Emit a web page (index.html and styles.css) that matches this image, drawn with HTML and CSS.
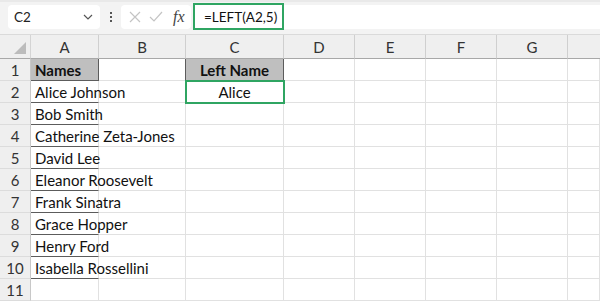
FILE: index.html
```html
<!DOCTYPE html>
<html>
<head>
<meta charset="utf-8">
<link rel="stylesheet" href="styles.css">
</head>
<body>
<div class="toolbar">
  <div class="namebox"><span>C2</span>
    <svg class="chev" width="10" height="6" viewBox="0 0 10 6"><path d="M1 1 L5 5 L9 1" fill="none" stroke="#555" stroke-width="1.2"/></svg>
  </div>
  <div class="dots"><i></i><i></i><i></i></div>
  <div class="fxbox">
    <svg width="12" height="12" viewBox="0 0 12 12"><path d="M1 1 L11 11 M11 1 L1 11" stroke="#c4c4c4" stroke-width="1.2"/></svg>
    <svg width="14" height="12" viewBox="0 0 14 12"><path d="M1 6 L5 10 L13 1" fill="none" stroke="#c4c4c4" stroke-width="1.2"/></svg>
    <span class="fx">fx</span>
  </div>
  <div class="formula"><span class="fbox">=LEFT(A2,5)</span></div>
</div>
<div class="sheet">
  <div class="corner"><svg width="12" height="12" viewBox="0 0 12 12"><polygon points="12,0 12,12 0,12" fill="#bcbcbc"/></svg></div>
  <div class="ch">A</div><div class="ch">B</div><div class="ch">C</div><div class="ch">D</div><div class="ch">E</div><div class="ch">F</div><div class="ch">G</div><div class="ch last"></div>

  <div class="rh">1</div><div class="c a hd">Names</div><div class="c"></div><div class="c hd ctr cl">Left Name</div><div class="c"></div><div class="c"></div><div class="c"></div><div class="c"></div><div class="c"></div>
  <div class="rh">2</div><div class="c a">Alice Johnson</div><div class="c"></div><div class="c ctr sel">Alice</div><div class="c"></div><div class="c"></div><div class="c"></div><div class="c"></div><div class="c"></div>
  <div class="rh">3</div><div class="c a">Bob Smith</div><div class="c"></div><div class="c"></div><div class="c"></div><div class="c"></div><div class="c"></div><div class="c"></div><div class="c"></div>
  <div class="rh">4</div><div class="c a">Catherine Zeta-Jones</div><div class="c"></div><div class="c"></div><div class="c"></div><div class="c"></div><div class="c"></div><div class="c"></div><div class="c"></div>
  <div class="rh">5</div><div class="c a">David Lee</div><div class="c"></div><div class="c"></div><div class="c"></div><div class="c"></div><div class="c"></div><div class="c"></div><div class="c"></div>
  <div class="rh">6</div><div class="c a">Eleanor Roosevelt</div><div class="c"></div><div class="c"></div><div class="c"></div><div class="c"></div><div class="c"></div><div class="c"></div><div class="c"></div>
  <div class="rh">7</div><div class="c a">Frank Sinatra</div><div class="c"></div><div class="c"></div><div class="c"></div><div class="c"></div><div class="c"></div><div class="c"></div><div class="c"></div>
  <div class="rh">8</div><div class="c a">Grace Hopper</div><div class="c"></div><div class="c"></div><div class="c"></div><div class="c"></div><div class="c"></div><div class="c"></div><div class="c"></div>
  <div class="rh">9</div><div class="c a">Henry Ford</div><div class="c"></div><div class="c"></div><div class="c"></div><div class="c"></div><div class="c"></div><div class="c"></div><div class="c"></div>
  <div class="rh">10</div><div class="c a">Isabella Rossellini</div><div class="c"></div><div class="c"></div><div class="c"></div><div class="c"></div><div class="c"></div><div class="c"></div><div class="c"></div>
  <div class="rh">11</div><div class="c"></div><div class="c"></div><div class="c"></div><div class="c"></div><div class="c"></div><div class="c"></div><div class="c"></div><div class="c"></div>
</div>
</body>
</html>
```
FILE: styles.css
```css
* { box-sizing: border-box; }
html, body { margin: 0; padding: 0; }
body {
  width: 600px;
  height: 301px;
  overflow: hidden;
  background: #fff;
  font-family: Lato, "Liberation Sans", sans-serif;
  color: #1a1a1a;
}
.toolbar {
  height: 35px;
  background: #f3f3f3;
  border-top: 2px solid #e9e9e9;
  border-bottom: 1px solid #dadada;
  display: flex;
  align-items: center;
  padding-left: 8px;
  padding-bottom: 3px;
}
.namebox {
  width: 92px;
  height: 24px;
  background: #fff;
  border-radius: 4px;
  display: flex;
  align-items: center;
  justify-content: space-between;
  padding: 0 7px 0 6px;
  font-size: 13.5px;
  color: #222;
}
.dots {
  width: 21px;
  display: flex;
  flex-direction: column;
  align-items: center;
  gap: 2px;
}
.dots i { width: 2px; height: 2px; background: #555; display: block; }
.fxbox {
  width: 70px;
  height: 24px;
  background: #fff;
  border-radius: 4px;
  display: flex;
  align-items: center;
  padding-left: 8px;
  gap: 8px;
}
.fx {
  font-family: "Liberation Serif", serif;
  font-style: italic;
  font-size: 16px;
  color: #444;
  margin-left: 2px;
}
.formula {
  flex: 1;
  height: 24px;
  margin-left: 2px;
  background: #fff;
  display: flex;
  align-items: center;
  position: relative;
}
.fbox {
  height: 27px;
  width: 91px;
  border: 2px solid #2fa562;
  display: flex;
  align-items: center;
  padding-left: 9px;
  font-size: 13.5px;
  color: #111;
}
.sheet {
  display: grid;
  grid-template-columns: 31px 68px 87px 98px 71px 71px 71px 71px 1fr;
  grid-template-rows: 24px repeat(11, 22px);
}
.corner {
  background: #efefef;
  border-right: 1px solid #d4d4d4;
  border-bottom: 1px solid #a8a8a8;
  display: flex;
  align-items: flex-end;
  justify-content: flex-end;
  padding: 0 4px 4px 0;
}
.ch {
  background: #efefef;
  border-right: 1px solid #cfcfcf;
  border-bottom: 1px solid #a8a8a8;
  display: flex;
  align-items: center;
  justify-content: center;
  font-size: 15px;
  color: #333;
}
.ch.last { border-right: none; }
.rh {
  background: #efefef;
  border-right: 1px solid #c8c8c8;
  border-bottom: 1px solid #dcdcdc;
  display: flex;
  align-items: center;
  justify-content: center;
  font-size: 15px;
  color: #333;
}
.c {
  border-right: 1px solid #e1e1e1;
  border-bottom: 1px solid #e1e1e1;
  font-size: 15px;
  display: flex;
  align-items: center;
  padding-left: 4px;
  white-space: nowrap;
  overflow: visible;
  color: #111;
}
.c.a { border-bottom: 1px solid #5c5c5c; }
.hd {
  background: #bfbfbf;
  font-weight: bold;
  border-right: 1px solid #5c5c5c;
  border-bottom: 1px solid #5c5c5c;
}
.cl { border-left: 1px solid #5c5c5c; margin-left: -1px; }
.ctr { justify-content: center; padding-left: 0; }
.sel {
  position: relative;
  outline: 2px solid #2fa562;
  outline-offset: -1px;
  z-index: 2;
}
```
